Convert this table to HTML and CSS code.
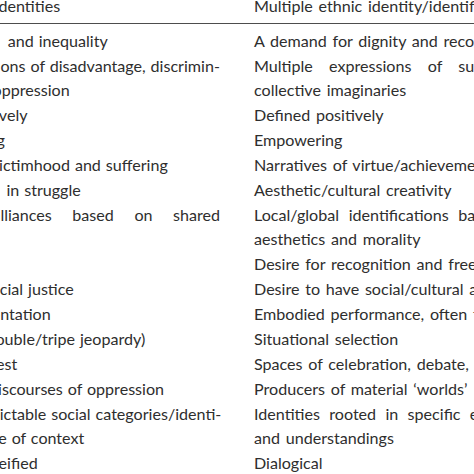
FILE: index.html
```html
<!DOCTYPE html>
<html lang="en">
<head>
<meta charset="utf-8">
<title>Singular and multiple ethnic identities</title>
<link rel="stylesheet" href="styles.css">
</head>
<body>
<div class="table">
  <div class="row head">
    <div class="cell">Simple ethnic identities</div>
    <div class="cell c2">Multiple ethnic identity/identifications</div>
  </div>
  <div class="tbody">
    <div class="row">
      <div class="cell">Racial injustice&#8197; and inequality</div>
      <div class="cell c2">A demand for dignity and recognition</div>
    </div>
    <div class="row">
      <div class="cell"><span class="line">Group expressions of disadvantage, discrimin-</span><span class="line">ation, racism, oppression</span></div>
      <div class="cell c2"><span class="line jl">Multiple expressions of success and</span><span class="line">collective imaginaries</span></div>
    </div>
    <div class="row">
      <div class="cell">Defined negatively</div>
      <div class="cell c2">Defined positively</div>
    </div>
    <div class="row">
      <div class="cell">Disempowering</div>
      <div class="cell c2">Empowering</div>
    </div>
    <div class="row">
      <div class="cell">Narratives of victimhood and suffering</div>
      <div class="cell c2">Narratives of virtue/achievement</div>
    </div>
    <div class="row">
      <div class="cell">Race solidarity&#8197; in struggle</div>
      <div class="cell c2">Aesthetic/cultural creativity</div>
    </div>
    <div class="row">
      <div class="cell"><span class="line jl">Anti-Racist alliances based on shared</span><span class="line">experiences</span></div>
      <div class="cell c2"><span class="line jl">Local/global identifications based on its</span><span class="line">aesthetics and morality</span></div>
    </div>
    <div class="row">
      <div class="cell"></div>
      <div class="cell c2">Desire for recognition and freedom</div>
    </div>
    <div class="row">
      <div class="cell">Demand for social justice</div>
      <div class="cell c2">Desire to have social/cultural acceptance</div>
    </div>
    <div class="row">
      <div class="cell">Political confrontation</div>
      <div class="cell c2">Embodied performance, often through music</div>
    </div>
    <div class="row">
      <div class="cell">Intersecting (double/tripe jeopardy)</div>
      <div class="cell c2">Situational selection</div>
    </div>
    <div class="row">
      <div class="cell">Spaces of protest</div>
      <div class="cell c2">Spaces of celebration, debate, dialogue</div>
    </div>
    <div class="row">
      <div class="cell">Producers of discourses of oppression</div>
      <div class="cell c2">Producers of material ‘worlds’</div>
    </div>
    <div class="row">
      <div class="cell"><span class="line">Rooted in predictable social categories/identi-</span><span class="line">ties irrespective of context</span></div>
      <div class="cell c2"><span class="line jl">Identities rooted in specific experiences</span><span class="line">and understandings</span></div>
    </div>
    <div class="row">
      <div class="cell">Essentialised, reified</div>
      <div class="cell c2">Dialogical</div>
    </div>
  </div>
</div>
</body>
</html>
```
FILE: styles.css
```css
html, body {
  margin: 0;
  padding: 0;
  background: #fff;
  overflow: hidden;
}
.table {
  margin-left: -106px;
  margin-top: -6.5px;
  width: 670px;
  font-family: Lato, "Open Sans", sans-serif;
  font-size: 16.1px;
  line-height: 24px;
  word-spacing: 0.8px;
  color: #2e2e2e;
}
.row {
  display: grid;
  grid-template-columns: 326px 300px;
  column-gap: 34px;
  padding: 0.5px 0;
}
.head {
  padding: 0 0 5.3px;
  border-bottom: 1.4px solid #4d4d4d;
}
.tbody {
  padding-top: 4.75px;
}
.cell {
  white-space: nowrap;
}
.c2 {
  word-spacing: 1.6px;
}
.line {
  display: block;
}
.jl {
  white-space: normal;
  text-align: justify;
  text-align-last: justify;
}
```
